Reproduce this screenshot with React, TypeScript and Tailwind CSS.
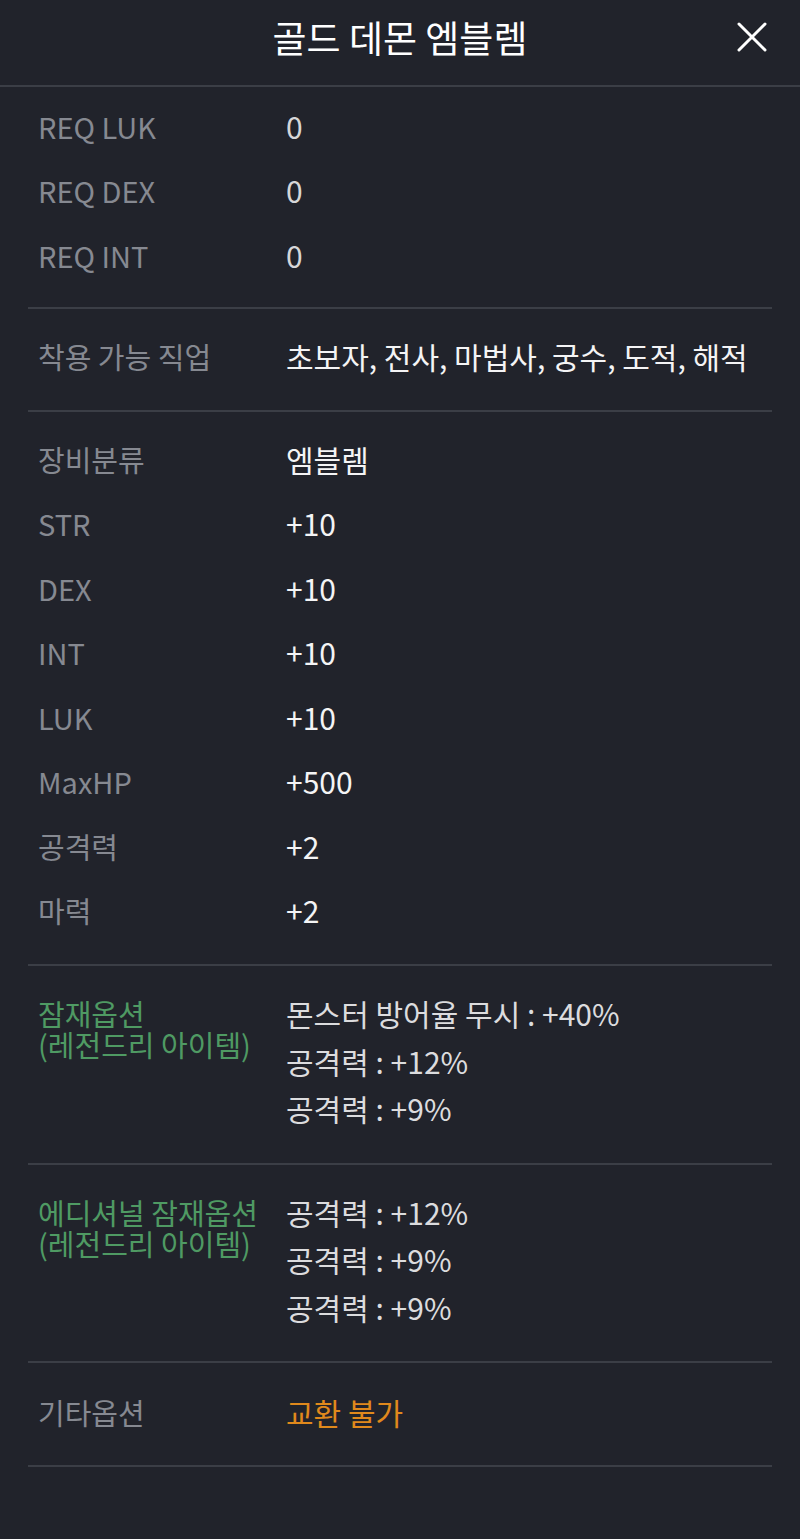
type Row = { label: string; value: string; valueClass?: string }

const reqRows: Row[] = [
  { label: "REQ LUK", value: "0", valueClass: "text-[#d6d6d8]" },
  { label: "REQ DEX", value: "0", valueClass: "text-[#d6d6d8]" },
  { label: "REQ INT", value: "0", valueClass: "text-[#d6d6d8]" },
]

const statRows: Row[] = [
  { label: "장비분류", value: "엠블렘" },
  { label: "STR", value: "+10" },
  { label: "DEX", value: "+10" },
  { label: "INT", value: "+10" },
  { label: "LUK", value: "+10" },
  { label: "MaxHP", value: "+500" },
  { label: "공격력", value: "+2" },
  { label: "마력", value: "+2" },
]

function StatRow({ label, value, valueClass }: Row) {
  return (
    <div className="flex items-center h-[64.5px]">
      <div className="w-[248px] shrink-0 text-[29px] text-[#868991]">{label}</div>
      <div className={`text-[30px] ${valueClass ?? "text-[#f4f4f5]"}`}>{value}</div>
    </div>
  )
}

function OptionBlock({ title, lines }: { title: string; lines: string[] }) {
  return (
    <section className="flex pl-[10px] pt-[24px] pb-[30px] border-b-2 border-[#3b3e46]">
      <div className="w-[248px] shrink-0 text-[29px] text-[#4f9a63] leading-[31px] pt-[8px]">
        <div>{title}</div>
        <div>(레전드리 아이템)</div>
      </div>
      <div className="text-[30px] text-[#dcdcde] leading-[47.5px]">
        {lines.map((l, i) => (
          <div key={i}>{l}</div>
        ))}
      </div>
    </section>
  )
}

export default function App() {
  return (
    <div
      className="w-[800px] min-h-[1539px] bg-[#21232b]"
      style={{ fontFamily: '"Noto Sans CJK KR", "Noto Sans", sans-serif' }}
    >
      <header className="relative h-[87px] flex items-center justify-center border-b-2 border-[#3b3e46]">
        <h1 className="text-[37px] text-white pb-[10px]">골드 데몬 엠블렘</h1>
        <button className="absolute right-[33px] top-[22px]">
          <svg width="30" height="30" viewBox="0 0 30 30" fill="none" stroke="white" strokeWidth="3" strokeLinecap="round">
            <path d="M2 2 L28 28 M28 2 L2 28" />
          </svg>
        </button>
      </header>

      <div className="mx-[28px]">
        <section className="pl-[10px] pt-[7px] pb-[19px] border-b-2 border-[#3b3e46]">
          {reqRows.map((r) => (
            <StatRow key={r.label} {...r} />
          ))}
        </section>

        <section className="pl-[10px] pt-[16px] pb-[21px] border-b-2 border-[#3b3e46]">
          <StatRow label="착용 가능 직업" value="초보자, 전사, 마법사, 궁수, 도적, 해적" />
        </section>

        <section className="pl-[10px] pt-[15px] pb-[21px] border-b-2 border-[#3b3e46]">
          {statRows.map((r) => (
            <StatRow key={r.label} {...r} />
          ))}
        </section>

        <OptionBlock title="잠재옵션" lines={["몬스터 방어율 무시 : +40%", "공격력 : +12%", "공격력 : +9%"]} />
        <OptionBlock title="에디셔널 잠재옵션" lines={["공격력 : +12%", "공격력 : +9%", "공격력 : +9%"]} />

        <section className="pl-[10px] pt-[17px] pb-[20px] border-b-2 border-[#3b3e46]">
          <StatRow label="기타옵션" value="교환 불가" valueClass="text-[#e0891c]" />
        </section>
      </div>
    </div>
  )
}
